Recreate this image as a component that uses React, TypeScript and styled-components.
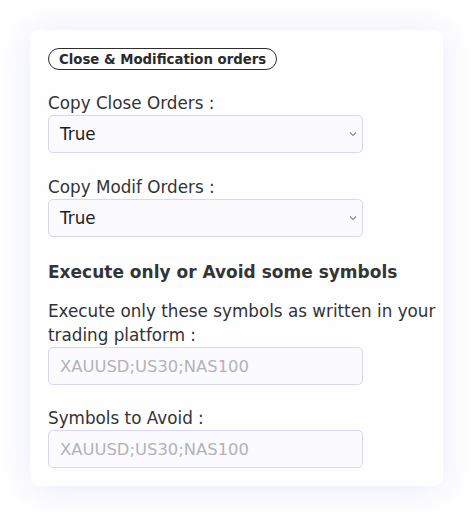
import React from "react";
import styled, { createGlobalStyle } from "styled-components";

const Global = createGlobalStyle`
  html, body { margin: 0; padding: 0; background: #ffffff; }
  body { font-family: "DejaVu Sans", "Liberation Sans", sans-serif; }
  * { box-sizing: border-box; }
`;

const Page = styled.div`
  padding: 30px 31px 30px 30px;
  width: 474px;
  height: 516px;
`;

const Card = styled.div`
  width: 413px;
  height: 456px;
  background: #fefeff;
  border-radius: 9px;
  box-shadow: 0 2px 36px rgba(120, 120, 235, 0.17);
  padding: 18px 4px 18px 18px;
  display: flex;
  flex-direction: column;
  align-items: flex-start;
`;

const Pill = styled.div`
  display: inline-flex;
  align-items: center;
  height: 23px;
  padding: 0 10px;
  border: 1.5px solid #2e2e2e;
  border-radius: 12px;
  font-size: 13.3px;
  font-weight: bold;
  color: #2a2a2a;
  margin-bottom: 21px;
  white-space: nowrap;
`;

const Field = styled.div<{ $gap?: number }>`
  display: flex;
  flex-direction: column;
  align-items: flex-start;
  margin-bottom: ${(p) => p.$gap ?? 0}px;
  width: 100%;
`;

const Label = styled.label`
  font-size: 16.8px;
  line-height: 24px;
  color: #333333;
`;

const Heading = styled.h3`
  margin: 0 0 15px 0;
  font-size: 17px;
  line-height: 24px;
  font-weight: bold;
  color: #353535;
`;

const SelectWrap = styled.div`
  position: relative;
  width: 315px;
`;

const Control = styled.div<{ $placeholder?: boolean }>`
  width: 315px;
  height: 38px;
  border: 1px solid #d9d6f1;
  border-radius: 5px;
  background: #fbfbff;
  display: flex;
  align-items: center;
  padding-left: 11px;
  font-size: ${(p) => (p.$placeholder ? "16.4px" : "16.8px")};
  color: ${(p) => (p.$placeholder ? "#b3b3b3" : "#1c1c1c")};
  white-space: nowrap;
`;

const Chevron = styled.svg`
  position: absolute;
  right: 6px;
  top: 50%;
  margin-top: -3px;
  width: 8px;
  height: 6px;
`;

const Select = ({ value }: { value: string }) => (
  <SelectWrap>
    <Control>{value}</Control>
    <Chevron viewBox="0 0 8 6">
      <path d="M1 1.5 L4 4.5 L7 1.5" fill="none" stroke="#8a8a8a" strokeWidth="1.1" />
    </Chevron>
  </SelectWrap>
);

export default function App() {
  return (
    <>
      <Global />
      <Page>
        <Card>
          <Pill>Close &amp; Modification orders</Pill>
          <Field $gap={22}>
            <Label>Copy Close Orders :</Label>
            <Select value="True" />
          </Field>
          <Field $gap={23}>
            <Label>Copy Modif Orders :</Label>
            <Select value="True" />
          </Field>
          <Heading>Execute only or Avoid some symbols</Heading>
          <Field $gap={21}>
            <Label>Execute only these symbols as written in your trading platform :</Label>
            <Control $placeholder>XAUUSD;US30;NAS100</Control>
          </Field>
          <Field>
            <Label>Symbols to Avoid :</Label>
            <Control $placeholder>XAUUSD;US30;NAS100</Control>
          </Field>
        </Card>
      </Page>
    </>
  );
}
